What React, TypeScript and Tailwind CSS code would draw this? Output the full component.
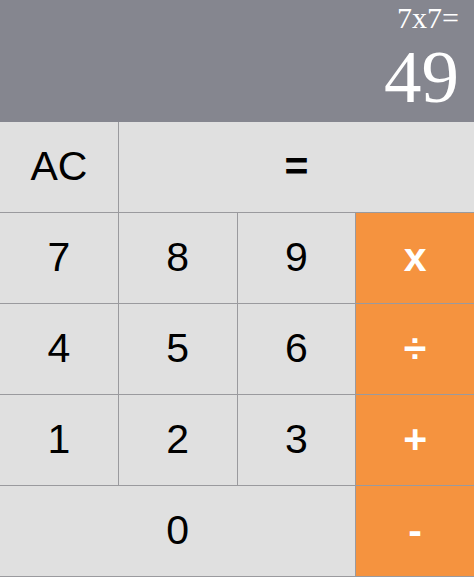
import React from 'react';

const KEYS = [
  { label: 'AC', span: 'col-span-1', orange: false, bold: false },
  { label: '=', span: 'col-span-3', orange: false, bold: true },
  { label: '7', span: 'col-span-1', orange: false, bold: false },
  { label: '8', span: 'col-span-1', orange: false, bold: false },
  { label: '9', span: 'col-span-1', orange: false, bold: false },
  { label: 'x', span: 'col-span-1', orange: true, bold: true },
  { label: '4', span: 'col-span-1', orange: false, bold: false },
  { label: '5', span: 'col-span-1', orange: false, bold: false },
  { label: '6', span: 'col-span-1', orange: false, bold: false },
  { label: '÷', span: 'col-span-1', orange: true, bold: true },
  { label: '1', span: 'col-span-1', orange: false, bold: false },
  { label: '2', span: 'col-span-1', orange: false, bold: false },
  { label: '3', span: 'col-span-1', orange: false, bold: false },
  { label: '+', span: 'col-span-1', orange: true, bold: true },
  { label: '0', span: 'col-span-3', orange: false, bold: false },
  { label: '-', span: 'col-span-1', orange: true, bold: true },
];

export default function App() {
  return (
    <div className="w-[474px] h-[577px] flex flex-col bg-[#9a9a9e] overflow-hidden">
      {/* Display */}
      <div className="h-[122px] bg-[#85868f] flex flex-col items-end pr-[15px] text-white font-['Liberation_Serif',serif]">
        <div className="text-[30px] leading-none mt-[3px]">7x7=</div>
        <div className="text-[75px] leading-none mt-[6px]">49</div>
      </div>

      {/* Keypad */}
      <div className="grid grid-cols-4 grid-rows-[repeat(5,90px)] gap-px flex-1 font-['Liberation_Sans',Arial,sans-serif]">
        {KEYS.map((k) => (
          <button
            key={k.label}
            className={`${k.span} flex items-center justify-center text-[41px] ${k.bold ? 'font-bold' : 'font-normal'} ${
              k.orange ? 'bg-[#f5933f] text-white' : 'bg-[#e0e0e0] text-black'
            }`}
          >
            {k.label}
          </button>
        ))}
      </div>
    </div>
  );
}
